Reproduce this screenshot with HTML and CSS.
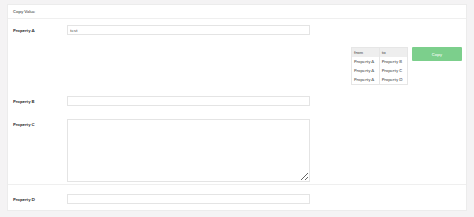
FILE: index.html
```html
<!DOCTYPE html>
<html lang="en">
<head>
<meta charset="UTF-8" />
<title>Copy Value</title>
<link rel="stylesheet" href="styles.css">
</head>
<body>

<div class="card">
  <div class="card-header">Copy Value</div>

  <div class="card-body">
    <div class="field">
      <label class="field-label">Property A</label>
      <input class="field-input" type="text" value="test">
    </div>

    <div class="copy-area">
      <table class="map">
        <thead>
          <tr><th>from</th><th>to</th></tr>
        </thead>
        <tbody>
          <tr><td>Property A</td><td>Property B</td></tr>
          <tr><td>Property A</td><td>Property C</td></tr>
          <tr><td>Property A</td><td>Property D</td></tr>
        </tbody>
      </table>
      <button class="btn-copy">Copy</button>
    </div>

    <div class="field">
      <label class="field-label">Property B</label>
      <input class="field-input" type="text">
    </div>

    <div class="field field-tall">
      <label class="field-label">Property C</label>
      <textarea class="field-input field-area"></textarea>
    </div>
  </div>

  <div class="card-footer">
    <div class="field">
      <label class="field-label">Property D</label>
      <input class="field-input" type="text">
    </div>
  </div>
</div>

</body>
</html>
```

FILE: styles.css
```css
body {
  margin: 0;
  padding: 4px 7px 4px 7px;
  background: #f4f3f4;
  font-family: Lato, "Open Sans", sans-serif;
  color: #333;
}

.card {
  background: #fff;
  border: 1px solid #ececec;
  height: 207px;
  box-sizing: border-box;
}

.card-header {
  height: 13px;
  line-height: 13px;
  padding-left: 5px;
  font-size: 4.5px;
  border-bottom: 1px solid #efefef;
}

.card-body {
  padding: 6px 4px 0 5px;
  border-bottom: 1px solid #efefef;
  padding-bottom: 2px;
}

.card-footer {
  padding: 9px 4px 0 5px;
}

.field {
  display: flex;
  align-items: center;
}

.field-tall {
  align-items: flex-start;
}

.field-tall .field-label {
  margin-top: 3px;
}

.field-label {
  width: 54px;
  font-size: 4.5px;
  font-weight: bold;
  color: #2a2a2a;
}

.field-input {
  width: 243px;
  height: 10px;
  box-sizing: border-box;
  margin: 0;
  padding: 0 2px;
  border: 1px solid #e4e4e4;
  font-family: inherit;
  font-size: 4.5px;
  color: #555;
  outline: none;
}

.field-area {
  height: 63px;
  resize: vertical;
}

.copy-area {
  display: flex;
  justify-content: flex-end;
  align-items: flex-start;
  gap: 4px;
  margin: 12px 0 11px 0;
}

.map {
  border-collapse: collapse;
  width: 57px;
  font-size: 4.3px;
  color: #444;
  border: 1px solid #e6e6e6;
}

.map th,
.map td {
  text-align: left;
  font-weight: normal;
  padding: 0 2px;
  height: 9px;
  border-left: 1px solid #e6e6e6;
}

.map thead th {
  background: #eeeeee;
}

.btn-copy {
  width: 50px;
  height: 14px;
  background: #7ccf8c;
  border: none;
  border-radius: 1px;
  color: #fff;
  font-family: inherit;
  font-size: 4.5px;
  padding: 0;
}

.field + .field {
  margin-top: 13px;
}
```
